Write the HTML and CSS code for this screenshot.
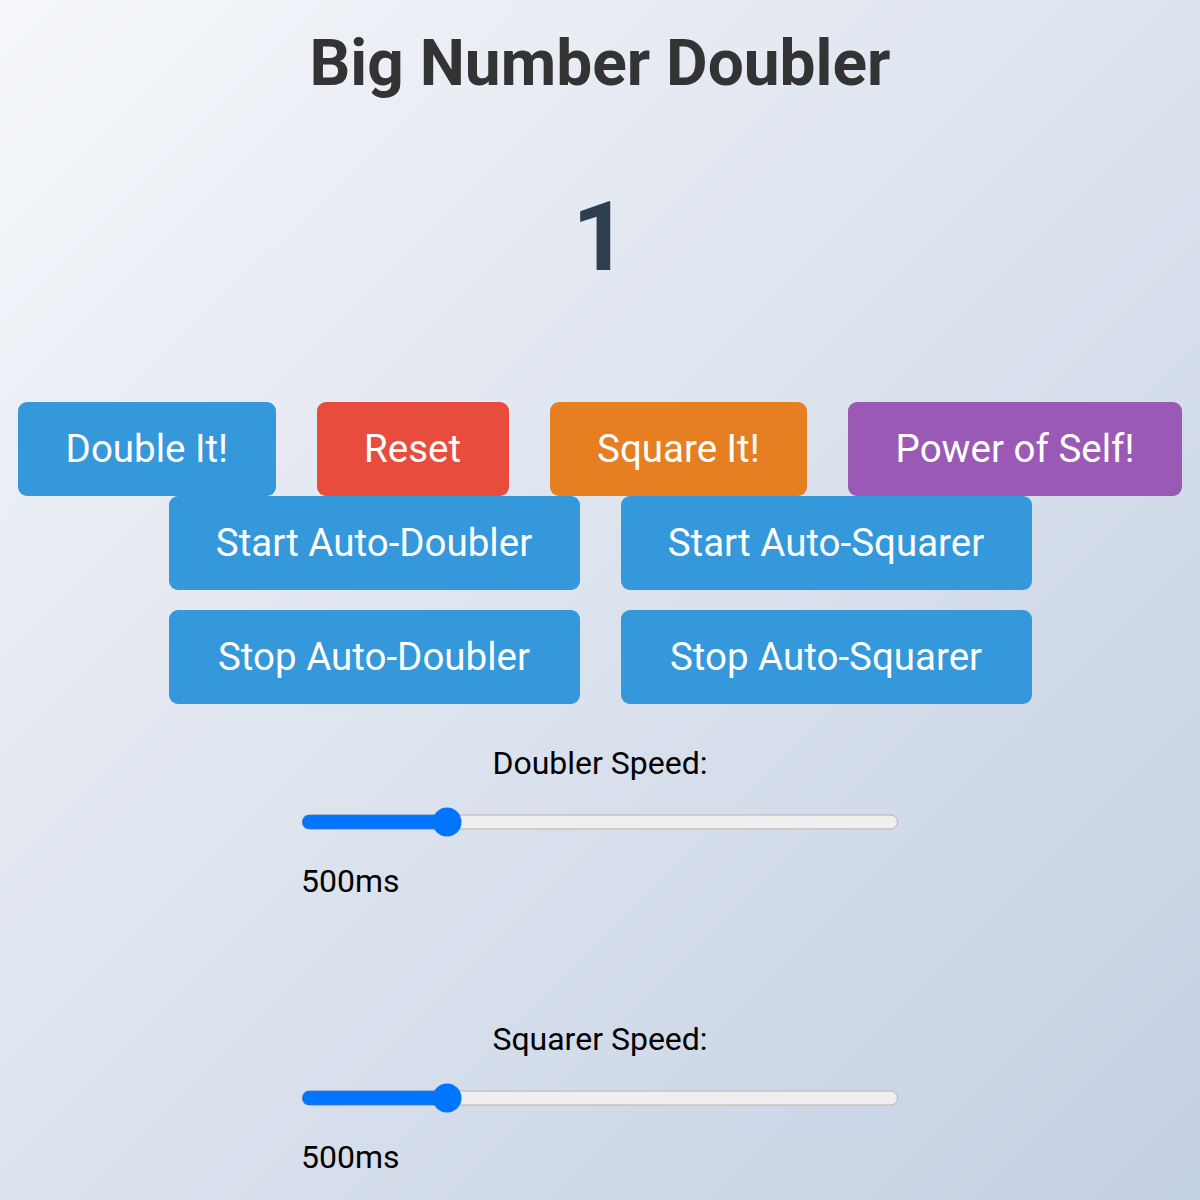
FILE: index.html
```html
<html>

<head>
  <title>Big Number Doubler</title>
  <link rel="stylesheet" href="styles.css">
</head>

<body>

  <h1>Big Number Doubler</h1>
  <div id="number" class="number">1</div>

  <div class="row">
    <button class="btn blue" onclick="double()">Double It!</button>
    <button class="btn red" onclick="reset()">Reset</button>
    <button class="btn orange">Square It!</button>
    <button class="btn purple">Power of Self!</button>
  </div>
  <div class="row auto">
    <button class="btn blue wide">Start Auto-Doubler</button>
    <button class="btn blue wide">Start Auto-Squarer</button>
  </div>
  <div class="row auto stop">
    <button class="btn blue wide">Stop Auto-Doubler</button>
    <button class="btn blue wide">Stop Auto-Squarer</button>
  </div>

  <div class="speed">
    <label for="doubler-speed">Doubler Speed:</label>
    <input id="doubler-speed" type="range" min="50" max="2000" value="500" oninput="showSpeed(this)">
    <span class="value">500ms</span>
  </div>

  <div class="speed second">
    <label for="squarer-speed">Squarer Speed:</label>
    <input id="squarer-speed" type="range" min="50" max="2000" value="500" oninput="showSpeed(this)">
    <span class="value">500ms</span>
  </div>

  <script>
    const numberEl = document.querySelector('#number');
    let value = 1n;

    function double() {
      value *= 2n;
      numberEl.textContent = value.toString();
    }

    function reset() {
      value = 1n;
      numberEl.textContent = '1';
    }

    function showSpeed(input) {
      input.nextElementSibling.textContent = input.value + 'ms';
    }
  </script>

</body>

</html>
```

FILE: styles.css
```css
body {
  margin: 0;
  min-height: 100vh;
  background: linear-gradient(135deg, #f5f7fa 0%, #c3cfe2 100%);
  font-family: Roboto, "Liberation Sans", sans-serif;
  text-align: center;
}

h1 {
  margin: 27px 0 0;
  font-size: 64px;
  line-height: 74px;
  font-weight: 700;
  color: #333;
}

.number {
  margin-top: 78px;
  font-size: 97px;
  line-height: 116px;
  font-weight: 700;
  color: #2c3e50;
}

.row {
  display: flex;
  justify-content: center;
  gap: 41px;
  margin-top: 107px;
}

.row.auto {
  margin-top: 0;
}

.row.stop {
  margin-top: 20px;
}

.btn {
  font-family: Roboto, "Liberation Sans", sans-serif;
  font-size: 38.5px;
  line-height: 46px;
  padding: 24px 47.5px;
  border: none;
  border-radius: 9px;
  color: #fff;
  cursor: pointer;
}

.btn.wide {
  width: 411px;
  padding-left: 0;
  padding-right: 0;
}

.blue {
  background-color: #3498db;
}

.red {
  background-color: #e74c3c;
}

.orange {
  background-color: #e67e22;
}

.purple {
  background-color: #9b59b6;
}

.speed {
  width: 598px;
  margin: 40px auto 0;
  text-align: left;
  font-size: 32px;
  line-height: 38px;
  color: #000;
}

.speed.second {
  margin-top: 120px;
}

.speed label {
  display: block;
  text-align: center;
}

.speed input {
  display: block;
  zoom: 1.875;
  width: 319px;
  margin: 13.33px 0;
}

.value {
  display: block;
}
```
